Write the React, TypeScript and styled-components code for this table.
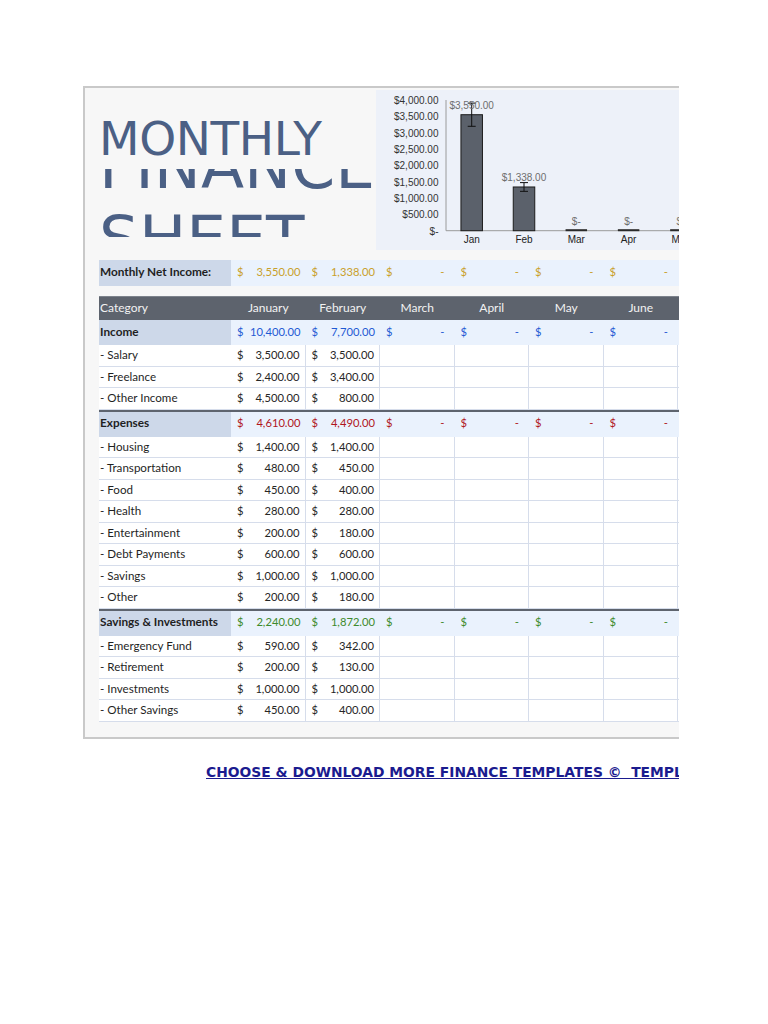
import React from "react";
import styled, { createGlobalStyle } from "styled-components";

const GlobalStyle = createGlobalStyle`
  html, body { margin: 0; padding: 0; background: #ffffff; }
  * { box-sizing: border-box; }
`;

const MONTHS = ["January", "February", "March", "April", "May", "June"];

type Tone = "gold" | "blue" | "red" | "green" | "plain";
const TONES: Record<Tone, string> = {
  gold: "#c9a02a",
  blue: "#1f5ad4",
  red: "#b0161c",
  green: "#3e8a2c",
  plain: "#262626",
};

const Page = styled.div`
  width: 679px;
  overflow: hidden;
  padding: 86px 0 0 83px;
  font-family: Lato, "Liberation Sans", sans-serif;
`;

const Sheet = styled.div`
  width: 660px;
  background: #f7f7f7;
  border-top: 2px solid #c9c9c9;
  border-left: 2px solid #c9c9c9;
  border-bottom: 2px solid #c9c9c9;
  padding: 0 0 15px 14px;
`;

const Top = styled.div`
  display: flex;
  height: 162px;
  margin-bottom: 10px;
`;

const TitleBlock = styled.div`
  width: 277px;
  flex: none;
  display: flex;
  flex-direction: column;
  color: #4b6085;
  font-family: "DejaVu Sans", sans-serif;
`;

const TitleLine = styled.div<{ $size: number; $clip: number; $top: number; $shift: number; $spacing?: number }>`
  height: ${(p) => p.$clip}px;
  margin-top: ${(p) => p.$top}px;
  overflow: hidden;
  white-space: nowrap;
  & > span {
    display: block;
    font-size: ${(p) => p.$size}px;
    line-height: ${(p) => p.$size}px;
    letter-spacing: ${(p) => p.$spacing ?? 0}px;
    margin-top: ${(p) => p.$shift}px;
  }
`;

const ChartPanel = styled.div`
  flex: 1;
  margin-top: 2px;
  height: 160px;
  background: #edf1f9;
`;

const Grid = styled.div`
  display: grid;
  grid-template-columns: 132px repeat(7, 74.5px);
`;

const Row = styled(Grid)<{ $h: number; $rule?: boolean }>`
  height: ${(p) => p.$h + (p.$rule ? 2 : 0)}px;
  border-top: ${(p) => (p.$rule ? "2px solid #5e646e" : "none")};
`;

const NetRow = styled(Row)`
  margin-bottom: 10px;
`;

const LabelCell = styled.div<{ $kind: "section" | "item" }>`
  display: flex;
  align-items: center;
  padding: 0 0 ${(p) => (p.$kind === "section" ? 3 : 1)}px 1px;
  font-size: ${(p) => (p.$kind === "section" ? 11.8 : 11.6)}px;
  color: #1f1f1f;
  white-space: nowrap;
  font-weight: ${(p) => (p.$kind === "section" ? 700 : 400)};
  background: ${(p) => (p.$kind === "section" ? "#cdd8e9" : "#ffffff")};
  border-bottom: ${(p) => (p.$kind === "item" ? "1px solid #d6ddeb" : "none")};
`;

const MoneyCell = styled.div<{ $tone: Tone; $kind: "section" | "item"; $dash?: boolean }>`
  display: flex;
  align-items: center;
  justify-content: space-between;
  padding: 0 ${(p) => (p.$dash ? 10 : 5)}px ${(p) => (p.$kind === "section" ? 3 : 1)}px 6px;
  font-size: 11.2px;
  white-space: nowrap;
  color: ${(p) => TONES[p.$tone]};
  background: ${(p) => (p.$kind === "section" ? "#eaf2fd" : "#ffffff")};
  border-bottom: ${(p) => (p.$kind === "item" ? "1px solid #d6ddeb" : "none")};
  border-right: ${(p) => (p.$kind === "item" ? "1px solid #d6ddeb" : "none")};
`;

const HeadRow = styled(Grid)`
  height: 24px;
  background: #5d636d;
  border-top: 1px solid #7d838c;
`;

const HeadCell = styled.div<{ $left?: boolean }>`
  display: flex;
  align-items: center;
  justify-content: ${(p) => (p.$left ? "flex-start" : "center")};
  padding: 0 0 3px ${(p) => (p.$left ? 1 : 0)}px;
  color: #f2f2f2;
  font-size: 12px;
`;

const Footer = styled.div`
  margin: 22px 0 0 123px;
  white-space: nowrap;
`;

const FooterLink = styled.a`
  font-family: "DejaVu Sans", sans-serif;
  font-weight: 700;
  font-size: 13.85px;
  line-height: 16px;
  color: #1b1b8f;
  text-decoration: underline;
`;

const fmt = (v: number) =>
  v.toLocaleString("en-US", { minimumFractionDigits: 2, maximumFractionDigits: 2 });

function Money({ v, tone, kind }: { v: number | null; tone: Tone; kind: "section" | "item" }) {
  if (v === null) return <MoneyCell $tone={tone} $kind={kind} />;
  const dash = v === 0;
  return (
    <MoneyCell $tone={tone} $kind={kind} $dash={dash}>
      <span>$</span>
      <span>{dash ? "-" : fmt(v)}</span>
    </MoneyCell>
  );
}

type Section = {
  name: string;
  tone: Tone;
  totals: [number, number];
  items: [string, number, number][];
};

const SECTIONS: Section[] = [
  {
    name: "Income",
    tone: "blue",
    totals: [10400, 7700],
    items: [
      ["- Salary", 3500, 3500],
      ["- Freelance", 2400, 3400],
      ["- Other Income", 4500, 800],
    ],
  },
  {
    name: "Expenses",
    tone: "red",
    totals: [4610, 4490],
    items: [
      ["- Housing", 1400, 1400],
      ["- Transportation", 480, 450],
      ["- Food", 450, 400],
      ["- Health", 280, 280],
      ["- Entertainment", 200, 180],
      ["- Debt Payments", 600, 600],
      ["- Savings", 1000, 1000],
      ["- Other", 200, 180],
    ],
  },
  {
    name: "Savings & Investments",
    tone: "green",
    totals: [2240, 1872],
    items: [
      ["- Emergency Fund", 590, 342],
      ["- Retirement", 200, 130],
      ["- Investments", 1000, 1000],
      ["- Other Savings", 450, 400],
    ],
  },
];

const CHART = [
  { m: "Jan", v: 3550 },
  { m: "Feb", v: 1338 },
  { m: "Mar", v: 0 },
  { m: "Apr", v: 0 },
  { m: "May", v: 0 },
];

function Chart() {
  const base = 140.7;
  const top = 10;
  const scale = (base - top) / 4000;
  const axisX = 70;
  const step = 52.3;
  const first = 95.7;
  const bw = 21.5;
  const ticks = [4000, 3500, 3000, 2500, 2000, 1500, 1000, 500, 0];
  return (
    <svg width="330" height="160" viewBox="0 0 330 160" style={{ display: "block" }}>
      {ticks.map((t) => (
        <text
          key={t}
          x={62.5}
          y={base - t * scale + 4}
          textAnchor="end"
          fontFamily="'Liberation Sans', Arial, sans-serif"
          fontSize="10"
          fill="#333333"
        >
          {t === 0 ? "$-" : "$" + fmt(t)}
        </text>
      ))}
      <line x1={axisX} y1={top} x2={axisX} y2={base} stroke="#9a9a9a" strokeWidth="1" />
      <line x1={axisX} y1={base} x2={330} y2={base} stroke="#9a9a9a" strokeWidth="1" />
      {CHART.map((d, i) => {
        const cx = first + i * step;
        const h = d.v * scale;
        const y = base - h;
        const err = d.v * 0.1 * scale;
        return (
          <g key={d.m}>
            {d.v > 0 ? (
              <rect x={cx - bw / 2} y={y} width={bw} height={h} fill="#5b616b" stroke="#1c1c1c" strokeWidth="1" />
            ) : (
              <line x1={cx - bw / 2} y1={base - 0.5} x2={cx + bw / 2} y2={base - 0.5} stroke="#2a2a2a" strokeWidth="2" />
            )}
            {d.v > 0 && (
              <g stroke="#111" strokeWidth="1">
                <line x1={cx} y1={y - err} x2={cx} y2={y + err} />
                <line x1={cx - 4} y1={y - err} x2={cx + 4} y2={y - err} />
                <line x1={cx - 4} y1={y + err} x2={cx + 4} y2={y + err} />
              </g>
            )}
            <text
              x={cx}
              y={y - 9 + 3.5}
              textAnchor="middle"
              fontFamily="'Liberation Sans', Arial, sans-serif"
              fontSize="10"
              fill="#6e6e6e"
            >
              {d.v > 0 ? "$" + fmt(d.v) : "$-"}
            </text>
            <text
              x={cx}
              y={153}
              textAnchor="middle"
              fontFamily="'Liberation Sans', Arial, sans-serif"
              fontSize="10"
              fill="#222"
            >
              {d.m}
            </text>
          </g>
        );
      })}
    </svg>
  );
}

export default function App() {
  return (
    <>
      <GlobalStyle />
      <Page>
        <Sheet>
          <Top>
            <TitleBlock>
              <TitleLine $size={47} $clip={48} $top={27} $shift={0} $spacing={-0.4}>
                <span>MONTHLY</span>
              </TitleLine>
              <TitleLine $size={63} $clip={21} $top={6} $shift={-34.3}>
                <span>FINANCE</span>
              </TitleLine>
              <TitleLine $size={63} $clip={37} $top={10} $shift={6.6}>
                <span>SHEET</span>
              </TitleLine>
            </TitleBlock>
            <ChartPanel>
              <Chart />
            </ChartPanel>
          </Top>

          <NetRow $h={26}>
            <LabelCell $kind="section">Monthly Net Income:</LabelCell>
            <Money v={3550} tone="gold" kind="section" />
            <Money v={1338} tone="gold" kind="section" />
            {[0, 0, 0, 0, 0].map((v, i) => (
              <Money key={i} v={v} tone="gold" kind="section" />
            ))}
          </NetRow>

          <HeadRow>
            <HeadCell $left>Category</HeadCell>
            {MONTHS.map((m) => (
              <HeadCell key={m}>{m}</HeadCell>
            ))}
            <HeadCell />
          </HeadRow>

          {SECTIONS.map((s, si) => (
            <React.Fragment key={s.name}>
              <Row $h={25} $rule={si > 0}>
                <LabelCell $kind="section">{s.name}</LabelCell>
                <Money v={s.totals[0]} tone={s.tone} kind="section" />
                <Money v={s.totals[1]} tone={s.tone} kind="section" />
                {[0, 0, 0, 0, 0].map((v, i) => (
                  <Money key={i} v={v} tone={s.tone} kind="section" />
                ))}
              </Row>
              {s.items.map(([label, a, b]) => (
                <Row key={label} $h={21.5}>
                  <LabelCell $kind="item">{label}</LabelCell>
                  <Money v={a} tone="plain" kind="item" />
                  <Money v={b} tone="plain" kind="item" />
                  {[0, 1, 2, 3, 4].map((i) => (
                    <Money key={i} v={null} tone="plain" kind="item" />
                  ))}
                </Row>
              ))}
            </React.Fragment>
          ))}
        </Sheet>
        <Footer>
          <FooterLink href="#">CHOOSE &amp; DOWNLOAD MORE FINANCE TEMPLATES ©&nbsp; TEMPLATELAB.COM</FooterLink>
        </Footer>
      </Page>
    </>
  );
}
